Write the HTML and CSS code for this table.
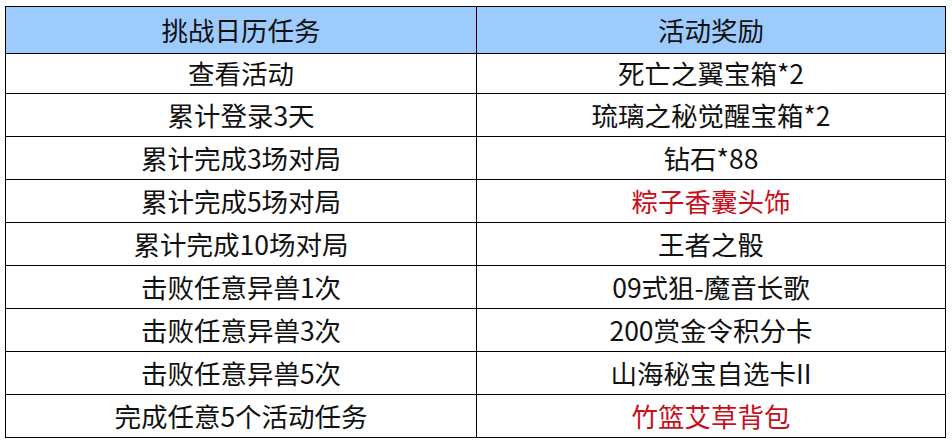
FILE: index.html
```html
<!DOCTYPE html>
<html lang="zh">
<head>
<meta charset="utf-8">
<link rel="stylesheet" href="styles.css">
</head>
<body>
<table class="tasks">
  <thead>
    <tr class="head"><th>挑战日历任务</th><th>活动奖励</th></tr>
  </thead>
  <tbody>
    <tr class="first"><td>查看活动</td><td>死亡之翼宝箱*2</td></tr>
    <tr><td>累计登录3天</td><td>琉璃之秘觉醒宝箱*2</td></tr>
    <tr><td>累计完成3场对局</td><td>钻石*88</td></tr>
    <tr><td>累计完成5场对局</td><td class="red">粽子香囊头饰</td></tr>
    <tr><td>累计完成10场对局</td><td>王者之骰</td></tr>
    <tr><td>击败任意异兽1次</td><td>09式狙-魔音长歌</td></tr>
    <tr><td>击败任意异兽3次</td><td>200赏金令积分卡</td></tr>
    <tr><td>击败任意异兽5次</td><td>山海秘宝自选卡II</td></tr>
    <tr><td>完成任意5个活动任务</td><td class="red">竹篮艾草背包</td></tr>
  </tbody>
</table>
</body>
</html>
```

FILE: styles.css
```css
html, body {
  margin: 0;
  padding: 0;
  background: #ffffff;
}
body {
  padding: 6px 0 0 5px;
  font-family: "Noto Sans CJK SC", "Noto Sans", sans-serif;
}
.tasks {
  border-collapse: collapse;
  width: 941px;
  table-layout: fixed;
  color: #111;
  font-size: 26.5px;
}
.tasks th, .tasks td {
  border: 1.5px solid #000;
  text-align: center;
  vertical-align: middle;
  padding: 0;
  font-weight: normal;
  line-height: 1;
}
.tasks th {
  background: #9ecbfd;
  height: 46px;
}
.tasks td {
  height: 42px;
}
.tasks tr.first td {
  height: 39px;
}
.tasks th:first-child, .tasks td:first-child {
  width: 470px;
}
.tasks .red {
  color: #c8101a;
}
```
